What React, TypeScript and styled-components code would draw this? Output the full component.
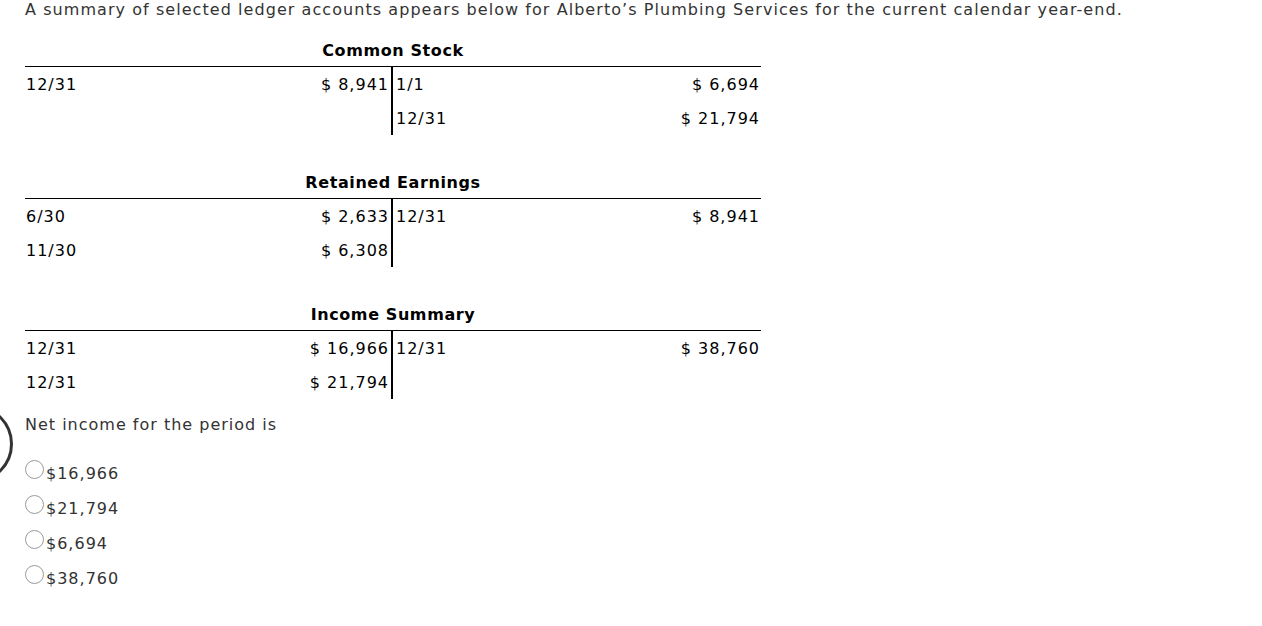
import styled, { createGlobalStyle } from "styled-components";

const GlobalStyle = createGlobalStyle`
  html, body {
    margin: 0;
    padding: 0;
    background: #ffffff;
  }
  body {
    font-family: "DejaVu Sans", Verdana, sans-serif;
    font-size: 16px;
    letter-spacing: 1px;
    color: #000;
  }
`;

const Page = styled.div`
  position: relative;
  padding: 0 0 0 25px;
`;

const Intro = styled.p`
  margin: 0;
  line-height: 20px;
  color: #333;
  white-space: nowrap;
  letter-spacing: 1.06px;
`;

const Ledger = styled.section<{ $first?: boolean }>`
  width: 736px;
  margin-top: ${(p) => (p.$first ? "13px" : "30px")};
`;

const LedgerTitle = styled.div`
  height: 34px;
  line-height: 34px;
  text-align: center;
  font-weight: bold;
  letter-spacing: 0.6px;
  border-bottom: 1px solid #000;
  box-sizing: border-box;
  padding-top: 1px;
`;

const Body = styled.div`
  display: grid;
  grid-template-columns: 366px 370px;
`;

const Side = styled.div<{ $right?: boolean }>`
  border-left: ${(p) => (p.$right ? "2px solid #000" : "none")};
`;

const Row = styled.div<{ $pad: number }>`
  display: flex;
  justify-content: space-between;
  height: 34px;
  line-height: 35px;
  padding: 0 ${(p) => p.$pad}px 0 0;
`;

const DateCell = styled.span<{ $indent?: boolean }>`
  padding-left: ${(p) => (p.$indent ? "3px" : "1px")};
`;

const Amount = styled.span`
  margin-right: -1px;
`;

const Question = styled.p`
  margin: 16px 0 0 0;
  line-height: 20px;
  color: #333;
`;

const Options = styled.div`
  margin-top: 21px;
  display: flex;
  flex-direction: column;
`;

const Option = styled.label`
  display: flex;
  align-items: center;
  height: 35px;
  color: #333;
`;

const Radio = styled.span`
  width: 19px;
  height: 19px;
  border-radius: 50%;
  border: 1px solid #9a9a9a;
  box-sizing: border-box;
  margin: -9px 2px 0 0;
  background: #fff;
`;

const Ring = styled.div`
  position: absolute;
  left: -65px;
  top: 405px;
  width: 78px;
  height: 78px;
  border-radius: 50%;
  border: 3px solid #333;
  box-sizing: border-box;
`;

type Entry = { date?: string; amount?: string };
type Account = { title: string; debit: Entry[]; credit: Entry[] };

const accounts: Account[] = [
  {
    title: "Common Stock",
    debit: [{ date: "12/31", amount: "$ 8,941" }, {}],
    credit: [
      { date: "1/1", amount: "$ 6,694" },
      { date: "12/31", amount: "$ 21,794" },
    ],
  },
  {
    title: "Retained Earnings",
    debit: [
      { date: "6/30", amount: "$ 2,633" },
      { date: "11/30", amount: "$ 6,308" },
    ],
    credit: [{ date: "12/31", amount: "$ 8,941" }, {}],
  },
  {
    title: "Income Summary",
    debit: [
      { date: "12/31", amount: "$ 16,966" },
      { date: "12/31", amount: "$ 21,794" },
    ],
    credit: [{ date: "12/31", amount: "$ 38,760" }, {}],
  },
];

const choices = ["$16,966", "$21,794", "$6,694", "$38,760"];

export default function App() {
  return (
    <>
      <GlobalStyle />
      <Page>
        <Ring />
        <Intro>
          A summary of selected ledger accounts appears below for Alberto’s
          Plumbing Services for the current calendar year-end.
        </Intro>
        {accounts.map((acc, i) => (
          <Ledger key={acc.title} $first={i === 0}>
            <LedgerTitle>{acc.title}</LedgerTitle>
            <Body>
              <Side>
                {acc.debit.map((e, j) => (
                  <Row key={j} $pad={3}>
                    <DateCell>{e.date}</DateCell>
                    <Amount>{e.amount}</Amount>
                  </Row>
                ))}
              </Side>
              <Side $right>
                {acc.credit.map((e, j) => (
                  <Row key={j} $pad={2}>
                    <DateCell $indent>{e.date}</DateCell>
                    <Amount>{e.amount}</Amount>
                  </Row>
                ))}
              </Side>
            </Body>
          </Ledger>
        ))}
        <Question>Net income for the period is</Question>
        <Options>
          {choices.map((c) => (
            <Option key={c}>
              <Radio />
              {c}
            </Option>
          ))}
        </Options>
      </Page>
    </>
  );
}
